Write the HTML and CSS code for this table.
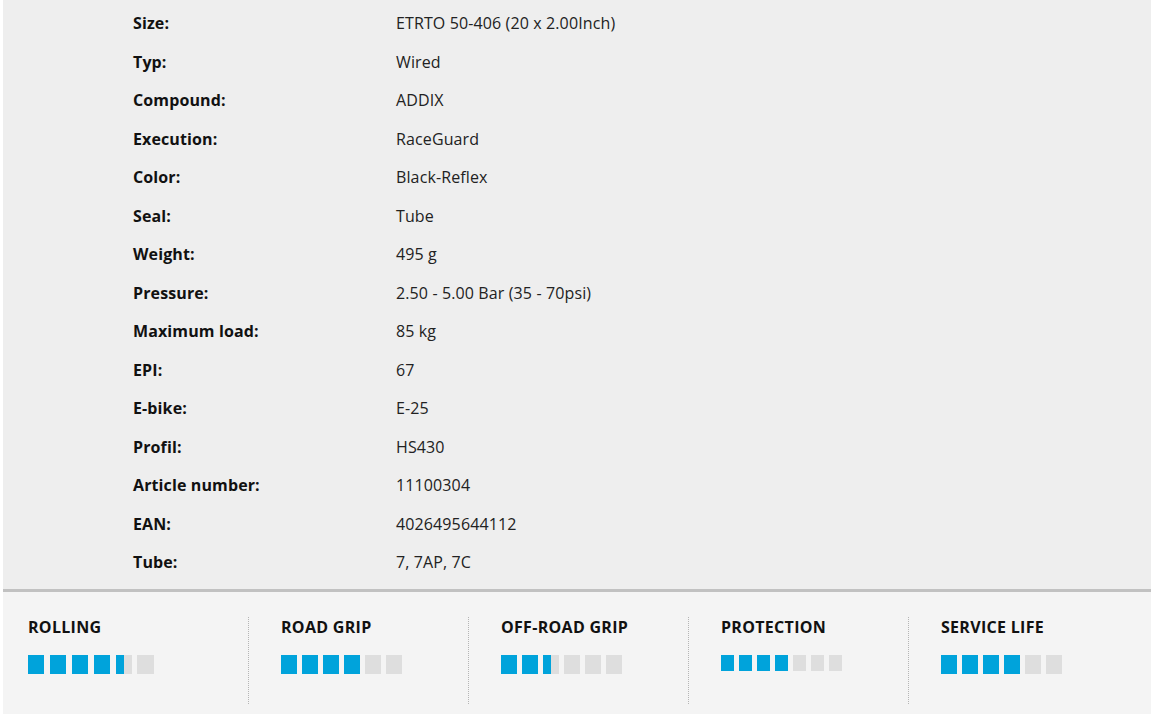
FILE: index.html
```html
<!DOCTYPE html>
<html lang="en">
<head>
<meta charset="utf-8">
<title>Tire specifications</title>
<link rel="stylesheet" href="styles.css">
</head>
<body>
<div class="page">
  <section class="specs">
    <dl class="spec-list">
      <div class="spec-row"><dt>Size:</dt><dd>ETRTO 50-406 (20 x 2.00Inch)</dd></div>
      <div class="spec-row"><dt>Typ:</dt><dd>Wired</dd></div>
      <div class="spec-row"><dt>Compound:</dt><dd>ADDIX</dd></div>
      <div class="spec-row"><dt>Execution:</dt><dd>RaceGuard</dd></div>
      <div class="spec-row"><dt>Color:</dt><dd>Black-Reflex</dd></div>
      <div class="spec-row"><dt>Seal:</dt><dd>Tube</dd></div>
      <div class="spec-row"><dt>Weight:</dt><dd>495 g</dd></div>
      <div class="spec-row"><dt>Pressure:</dt><dd>2.50 - 5.00 Bar (35 - 70psi)</dd></div>
      <div class="spec-row"><dt>Maximum load:</dt><dd>85 kg</dd></div>
      <div class="spec-row"><dt>EPI:</dt><dd>67</dd></div>
      <div class="spec-row"><dt>E-bike:</dt><dd>E-25</dd></div>
      <div class="spec-row"><dt>Profil:</dt><dd>HS430</dd></div>
      <div class="spec-row"><dt>Article number:</dt><dd>11100304</dd></div>
      <div class="spec-row"><dt>EAN:</dt><dd>4026495644112</dd></div>
      <div class="spec-row"><dt>Tube:</dt><dd>7, 7AP, 7C</dd></div>
    </dl>
  </section>
  <section class="ratings">
    <div class="rating">
      <h3 class="rating-title">ROLLING</h3>
      <div class="bar bar-wide">
        <span class="sq on"></span><span class="sq on"></span><span class="sq on"></span><span class="sq on"></span><span class="sq half"></span><span class="sq"></span>
      </div>
    </div>
    <div class="rating">
      <h3 class="rating-title">ROAD GRIP</h3>
      <div class="bar">
        <span class="sq on"></span><span class="sq on"></span><span class="sq on"></span><span class="sq on"></span><span class="sq"></span><span class="sq"></span>
      </div>
    </div>
    <div class="rating">
      <h3 class="rating-title">OFF-ROAD GRIP</h3>
      <div class="bar">
        <span class="sq on"></span><span class="sq on"></span><span class="sq half"></span><span class="sq"></span><span class="sq"></span><span class="sq"></span>
      </div>
    </div>
    <div class="rating">
      <h3 class="rating-title">PROTECTION</h3>
      <div class="bar bar-small">
        <span class="sq on"></span><span class="sq on"></span><span class="sq on"></span><span class="sq on"></span><span class="sq"></span><span class="sq"></span><span class="sq"></span>
      </div>
    </div>
    <div class="rating">
      <h3 class="rating-title">SERVICE LIFE</h3>
      <div class="bar">
        <span class="sq on"></span><span class="sq on"></span><span class="sq on"></span><span class="sq on"></span><span class="sq"></span><span class="sq"></span>
      </div>
    </div>
  </section>
</div>
</body>
</html>
```

FILE: styles.css
```css
html, body {
  margin: 0;
  padding: 0;
  background: #ffffff;
}

body {
  font-family: "Open Sans", "Liberation Sans", sans-serif;
  color: #222222;
  overflow: hidden;
}

.page {
  margin-left: 3px;
  height: 714px;
  display: flex;
  flex-direction: column;
}

.specs {
  background: #eeeeee;
  padding: 4px 0 7.5px 0;
}

.spec-list {
  margin: 0;
  padding-left: 130px;
}

.spec-row {
  display: flex;
  padding: 8px 0;
  font-size: 16px;
  line-height: 22.5px;
  letter-spacing: 0.12px;
}

.spec-row dt {
  width: 263px;
  font-weight: 700;
  color: #111111;
}

.spec-row dd {
  margin: 0;
  color: #222222;
}

.ratings {
  flex: 1;
  background: #f4f4f4;
  border-top: 3px solid #c1c1c1;
  display: flex;
  padding: 25px 0 0 25px;
}

.rating {
  width: 220px;
  height: 87px;
  box-sizing: border-box;
  border-left: 1px dotted #b5b5b5;
  padding-left: 32px;
}

.rating:first-child {
  border-left: none;
  padding-left: 0;
}

.rating-title {
  margin: 0;
  font-size: 16px;
  line-height: 18px;
  font-weight: 700;
  letter-spacing: 0.3px;
  color: #111111;
  padding-top: 1px;
}

.bar {
  display: flex;
  gap: 5px;
  margin-top: 19px;
}

.sq {
  width: 16px;
  height: 18.5px;
  background: #dedede;
}

.sq.on {
  background: #00a3db;
}

.sq.half {
  background: linear-gradient(to right, #00a3db 50%, #dedede 50%);
}

.bar-wide {
  gap: 5.6px;
}

.bar-wide .sq {
  width: 16.3px;
  height: 19px;
}

.bar-small {
  gap: 4.7px;
}

.bar-small .sq {
  width: 13.3px;
  height: 16px;
}
```
